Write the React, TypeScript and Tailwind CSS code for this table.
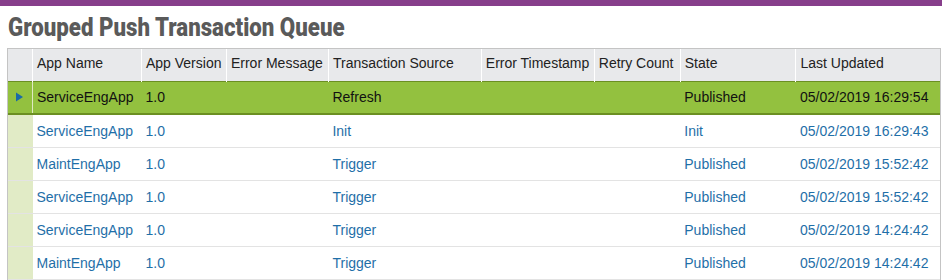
import React from 'react';

interface QueueRow {
  appName: string;
  appVersion: string;
  errorMessage: string;
  source: string;
  errorTimestamp: string;
  retryCount: string;
  state: string;
  lastUpdated: string;
}

const columns = [
  { label: 'App Name', width: 'w-[109px]' },
  { label: 'App Version', width: 'w-[85px]' },
  { label: 'Error Message', width: 'w-[102px]' },
  { label: 'Transaction Source', width: 'w-[153px]' },
  { label: 'Error Timestamp', width: 'w-[113px]' },
  { label: 'Retry Count', width: 'w-[86px]' },
  { label: 'State', width: 'w-[116px]' },
  { label: 'Last Updated', width: 'w-[144px]' },
];

const rows: QueueRow[] = [
  { appName: 'ServiceEngApp', appVersion: '1.0', errorMessage: '', source: 'Refresh', errorTimestamp: '', retryCount: '', state: 'Published', lastUpdated: '05/02/2019 16:29:54' },
  { appName: 'ServiceEngApp', appVersion: '1.0', errorMessage: '', source: 'Init', errorTimestamp: '', retryCount: '', state: 'Init', lastUpdated: '05/02/2019 16:29:43' },
  { appName: 'MaintEngApp', appVersion: '1.0', errorMessage: '', source: 'Trigger', errorTimestamp: '', retryCount: '', state: 'Published', lastUpdated: '05/02/2019 15:52:42' },
  { appName: 'ServiceEngApp', appVersion: '1.0', errorMessage: '', source: 'Trigger', errorTimestamp: '', retryCount: '', state: 'Published', lastUpdated: '05/02/2019 15:52:42' },
  { appName: 'ServiceEngApp', appVersion: '1.0', errorMessage: '', source: 'Trigger', errorTimestamp: '', retryCount: '', state: 'Published', lastUpdated: '05/02/2019 14:24:42' },
  { appName: 'MaintEngApp', appVersion: '1.0', errorMessage: '', source: 'Trigger', errorTimestamp: '', retryCount: '', state: 'Published', lastUpdated: '05/02/2019 14:24:42' },
];

const App = () => {
  const selected = 0;

  return (
    <div className="w-[942px] h-[280px] overflow-hidden bg-white font-['Liberation_Sans',Arial,sans-serif]">
      <div className="h-[6px] bg-[#873e8b]" />
      <div className="h-[42px] pl-[8px] pt-[7px]">
        {/* condensed look of the original heading font */}
        <h1 className="inline-block origin-left scale-x-[0.89] text-[25px] leading-[30px] font-black text-[#5a5a5a] whitespace-nowrap font-['Roboto',sans-serif]">
          Grouped Push Transaction Queue
        </h1>
      </div>

      <div className="ml-[7px] w-[934px] border-l border-t border-r border-[#c4c4c4]">
        <table className="table-fixed border-collapse text-[14px] leading-[16px]">
          <thead>
            <tr className="h-[32px] bg-[#e8e9eb] text-[#222]">
              <th className="w-[24px] p-0" />
              {columns.map((col) => (
                <th
                  key={col.label}
                  className={`${col.width} border-l border-white px-[4px] pb-[3px] text-left font-normal whitespace-nowrap`}
                >
                  {col.label}
                </th>
              ))}
            </tr>
          </thead>
          <tbody>
            {rows.map((row, i) => {
              const isSel = i === selected;
              const cells = [
                row.appName,
                row.appVersion,
                row.errorMessage,
                row.source,
                row.errorTimestamp,
                row.retryCount,
                row.state,
                row.lastUpdated,
              ];
              return (
                <tr
                  key={i}
                  className={
                    isSel
                      ? 'h-[33px] bg-[#93c13f] text-[#111] border-t border-b-2 border-[#6b8f22]'
                      : 'h-[33px] text-[#1f6fa8] border-b border-[#e3e3e3]'
                  }
                >
                  <td className={isSel ? 'p-0 border-r border-[#dfe9c2]' : 'p-0 bg-[#e1ebc6]'}>
                    {isSel && (
                      <svg width="24" height="10" viewBox="0 0 24 10" className="block">
                        <polygon points="8,0.5 15,5 8,9.5" fill="#1a6aa6" />
                      </svg>
                    )}
                  </td>
                  {cells.map((c, j) => (
                    <td key={j} className="px-[4px] whitespace-nowrap">
                      {c}
                    </td>
                  ))}
                </tr>
              );
            })}
          </tbody>
        </table>
      </div>
    </div>
  );
};

export default App;
